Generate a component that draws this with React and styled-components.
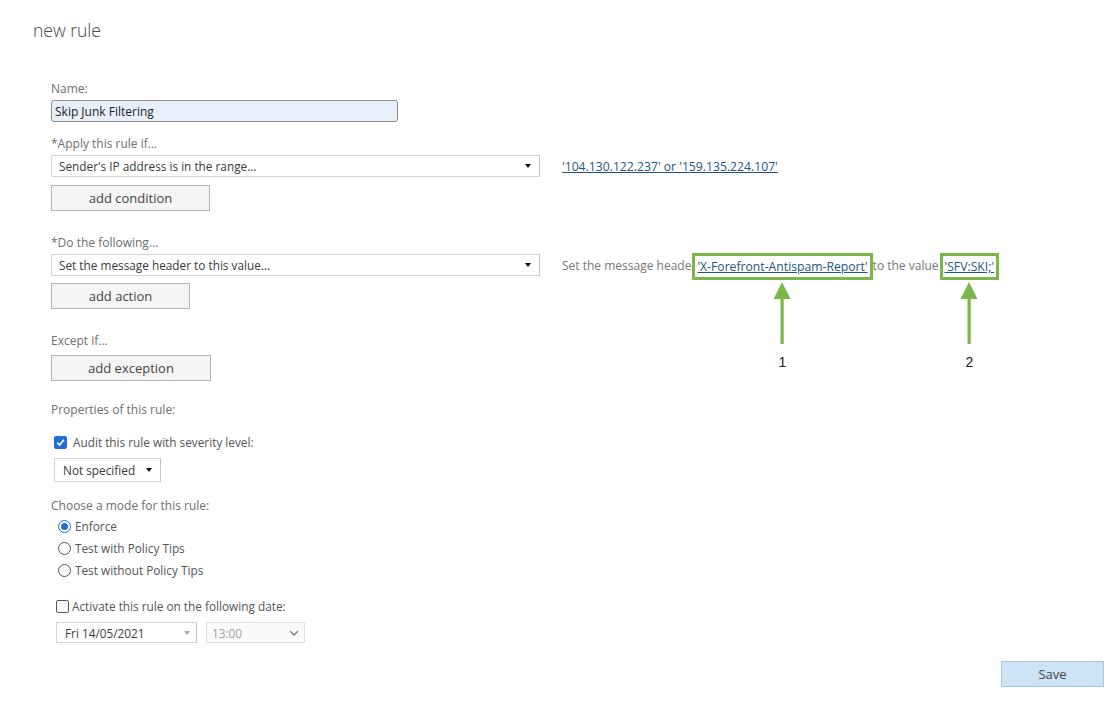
import React from 'react'
import styled, {createGlobalStyle} from 'styled-components'

const GlobalStyle = createGlobalStyle`
  html, body {
    margin: 0;
    padding: 0;
    background: #ffffff;
  }
  body {
    font-family: "Open Sans", "Noto Sans", sans-serif;
    color: #444;
  }
`

const Page = styled.div`
  display: flex;
  flex-direction: column;
  box-sizing: border-box;
  width: 1107px;
  height: 710px;
  padding: 20px 3px 0 33px;
`

const Title = styled.h1`
  margin: 0;
  font-size: 17.5px;
  line-height: 20px;
  font-weight: 300;
  color: #444;
`

const Form = styled.div`
  display: flex;
  flex-direction: column;
  align-items: flex-start;
  padding-left: 18px;
  margin-top: 42px;
`

const Label = styled.div`
  font-size: 12px;
  line-height: 14px;
  color: #6e6e6e;
  margin-top: ${p => p.$gap || 0}px;
`

const NameInput = styled.div`
  box-sizing: border-box;
  width: 347px;
  height: 22px;
  margin-top: 4px;
  padding: 0 3px;
  display: flex;
  align-items: center;
  background: #e7effa;
  border: 1px solid #8c8c8c;
  border-radius: 3px;
  font-size: 12px;
  color: #222;
`

const Row = styled.div`
  display: flex;
  align-items: center;
  margin-top: ${p => p.$gap || 0}px;
  margin-left: ${p => p.$indent || 0}px;
`

const Select = styled.div`
  box-sizing: border-box;
  width: ${p => p.$width}px;
  height: ${p => p.$height || 22}px;
  display: flex;
  align-items: center;
  justify-content: space-between;
  padding: 0 ${p => p.$padR || 8}px 0 ${p => p.$padL || 7}px;
  background: ${p => (p.$muted ? '#fafafa' : '#ffffff')};
  border: 1px solid ${p => (p.$muted ? '#e0e0e0' : '#d4d4d4')};
  border-right-color: ${p => (p.$muted ? '#e0e0e0' : '#c2c2c2')};
  font-size: 11.8px;
  color: ${p => (p.$muted ? '#a0a0a0' : '#3a3a3a')};
`

const Caret = styled.span`
  width: 0;
  height: 0;
  border-left: 3.5px solid transparent;
  border-right: 3.5px solid transparent;
  border-top: 4px solid ${p => p.$color || '#111'};
`

const Button = styled.div`
  box-sizing: border-box;
  width: ${p => p.$width}px;
  height: 26px;
  margin-top: ${p => p.$gap || 0}px;
  display: flex;
  align-items: center;
  justify-content: center;
  background: #f5f5f5;
  border: 1px solid #b4b4b4;
  font-size: 13px;
  color: #444;
`

const Side = styled.div`
  display: flex;
  align-items: center;
  margin-left: 22px;
  font-size: 12px;
  color: #777;
  white-space: nowrap;
`

const Link = styled.span`
  font-size: 12.2px;
  color: #24557f;
  text-decoration: underline;
`

const Highlight = styled.span`
  position: relative;
  display: inline-flex;
  align-items: center;
  height: 27px;
  margin: -1px 0 -4px 1px;
  box-sizing: border-box;
  padding: 0 2px;
  border: 3px solid #7ab648;
`

const Callout = styled.span`
  position: absolute;
  top: 100%;
  left: 50%;
  transform: translateX(-50%);
  display: flex;
  flex-direction: column;
  align-items: center;
  padding-top: 5px;
`

const CalloutNumber = styled.span`
  font-family: "Liberation Sans", Arial, sans-serif;
  font-size: 14px;
  line-height: 16px;
  color: #222;
  margin-top: 10px;
`

const CheckRow = styled.label`
  display: flex;
  align-items: center;
  height: 14px;
  margin-top: ${p => p.$gap || 0}px;
  padding-left: ${p => p.$indent || 3}px;
  font-size: 11.8px;
  color: #555;
`

const Box = styled.span`
  box-sizing: border-box;
  width: 13px;
  height: 13px;
  margin-right: ${p => p.$space || 6}px;
  border-radius: 2px;
  display: flex;
  align-items: center;
  justify-content: center;
  background: ${p => (p.$checked ? '#1f6fd6' : '#fff')};
  border: 1px solid ${p => (p.$checked ? '#1f6fd6' : '#555')};
`

const RadioGroup = styled.div`
  display: flex;
  flex-direction: column;
  margin-top: 2px;
`

const RadioRow = styled.label`
  display: flex;
  align-items: center;
  height: 22px;
  padding-left: 7px;
  font-size: 11.8px;
  color: #555;
`

const Radio = styled.span`
  box-sizing: border-box;
  width: 13px;
  height: 13px;
  margin-right: 4px;
  border-radius: 50%;
  display: flex;
  align-items: center;
  justify-content: center;
  border: 1px solid ${p => (p.$checked ? '#1f6fd6' : '#555')};
  &::after {
    content: '';
    display: ${p => (p.$checked ? 'block' : 'none')};
    width: 7px;
    height: 7px;
    border-radius: 50%;
    background: #1f6fd6;
  }
`

const DateRow = styled.div`
  display: flex;
  gap: 9px;
  margin-top: 9px;
  padding-left: 5px;
`

const Footer = styled.div`
  display: flex;
  justify-content: flex-end;
  margin-top: 18px;
`

const SaveButton = styled.div`
  box-sizing: border-box;
  width: 103px;
  height: 26px;
  display: flex;
  align-items: center;
  justify-content: center;
  background: #cde3f6;
  border: 1px solid #a3c6e6;
  font-size: 13px;
  color: #444;
`

const UpArrow = () => (
  <svg width="18" height="62" viewBox="0 0 18 62">
    <polygon points="9,0 17.5,17 0.5,17" fill="#7ab648" />
    <rect x="7.5" y="16" width="3.2" height="46" fill="#7ab648" />
  </svg>
)

const Check = () => (
  <svg width="9" height="9" viewBox="0 0 9 9">
    <path d="M1.2 4.6 L3.6 7 L7.9 1.8" fill="none" stroke="#fff" strokeWidth="1.7" />
  </svg>
)

const Chevron = () => (
  <svg width="10" height="6" viewBox="0 0 10 6">
    <path d="M1 1 L5 5 L9 1" fill="none" stroke="#777" strokeWidth="1.3" />
  </svg>
)

const Annotated = ({n, children}) => (
  <Highlight>
    {children}
    <Callout>
      <UpArrow/>
      <CalloutNumber>{n}</CalloutNumber>
    </Callout>
  </Highlight>
)

export default function App() {
  return (
    <Page>
      <GlobalStyle/>
      <Title>new rule</Title>
      <Form>
        <Label>Name:</Label>
        <NameInput>Skip Junk Filtering</NameInput>

        <Label $gap={15}>*Apply this rule if...</Label>
        <Row $gap={4}>
          <Select $width={489}>
            <span>Sender's IP address is in the range...</span>
            <Caret/>
          </Select>
          <Side>
            <Link>'104.130.122.237' or '159.135.224.107'</Link>
          </Side>
        </Row>
        <Button $width={159} $gap={8}>add condition</Button>

        <Label $gap={25}>*Do the following...</Label>
        <Row $gap={4}>
          <Select $width={489}>
            <span>Set the message header to this value...</span>
            <Caret/>
          </Select>
          <Side>
            <span>Set the message heade</span>
            <Annotated n="1"><Link>'X-Forefront-Antispam-Report'</Link></Annotated>
            <span>to the value</span>
            <Annotated n="2"><Link>'SFV:SKI;'</Link></Annotated>
          </Side>
        </Row>
        <Button $width={139} $gap={7}>add action</Button>

        <Label $gap={25}>Except if...</Label>
        <Button $width={160} $gap={7}>add exception</Button>

        <Label $gap={22}>Properties of this rule:</Label>
        <CheckRow $gap={18}>
          <Box $checked><Check/></Box>
          Audit this rule with severity level:
        </CheckRow>
        <Row $gap={9} $indent={3}>
          <Select $width={107} $height={24} $padL={8}>
            <span>Not specified</span>
            <Caret/>
          </Select>
        </Row>

        <Label $gap={17}>Choose a mode for this rule:</Label>
        <RadioGroup>
          <RadioRow><Radio $checked/>Enforce</RadioRow>
          <RadioRow><Radio/>Test with Policy Tips</RadioRow>
          <RadioRow><Radio/>Test without Policy Tips</RadioRow>
        </RadioGroup>

        <CheckRow $gap={18} $indent={5}>
          <Box $space={3}/>
          Activate this rule on the following date:
        </CheckRow>
        <DateRow>
          <Select $width={141} $height={21} $padL={8} $padR={6}>
            <span>Fri 14/05/2021</span>
            <Caret $color="#aaa"/>
          </Select>
          <Select $width={99} $height={21} $muted $padL={5} $padR={5}>
            <span>13:00</span>
            <Chevron/>
          </Select>
        </DateRow>
      </Form>
      <Footer>
        <SaveButton>Save</SaveButton>
      </Footer>
    </Page>
  )
}
